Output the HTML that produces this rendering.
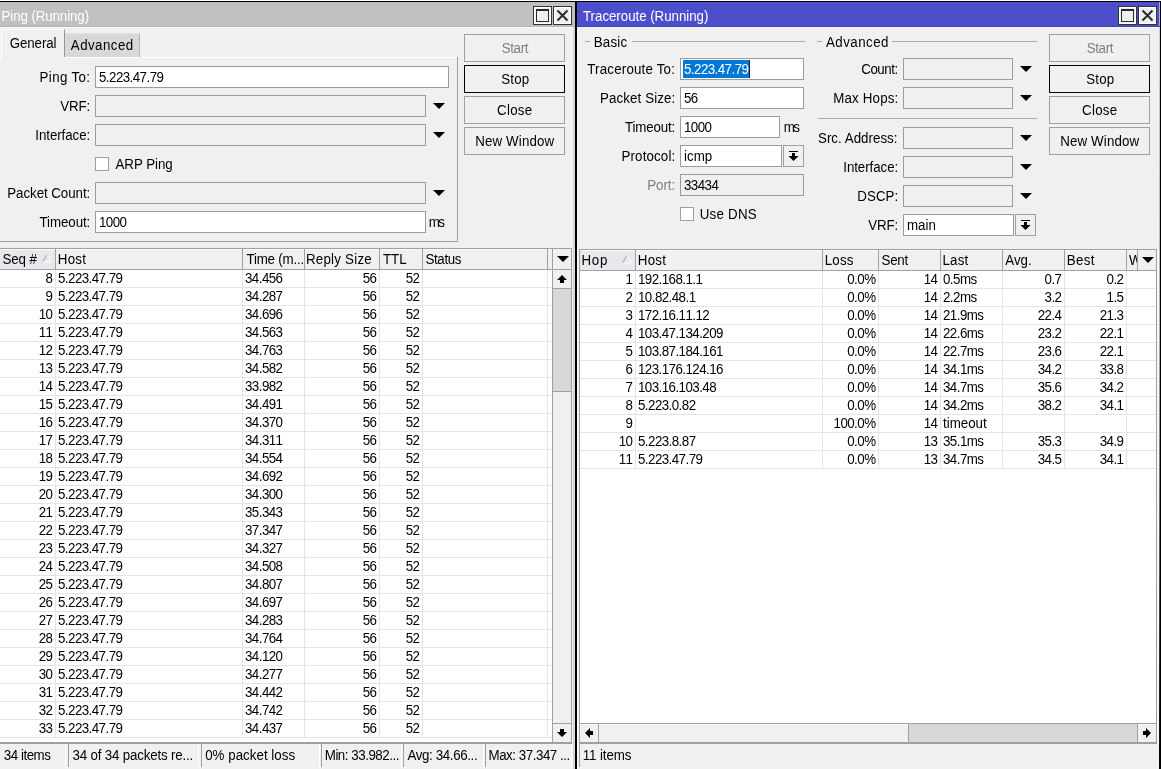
<!DOCTYPE html><html><head><meta charset="utf-8"><title>Ping / Traceroute</title><style>
html,body{margin:0;padding:0}
body{width:1161px;height:769px;overflow:hidden;background:#f0f0f0;position:relative;font-family:"Liberation Sans",sans-serif;font-size:13.33px;color:#000}
div{position:absolute;box-sizing:border-box}
.t{white-space:nowrap;line-height:16px;height:16px;transform:scaleY(1.07);transform-origin:0 12.5px}
.n{letter-spacing:-0.55px;font-kerning:none}
.in{border:1px solid #9c9c9c;background:#fff}
.dis{border:1px solid #9c9c9c;background:#f0f0f0}
.btn{border:1px solid #a0a0a0;background:#f0f0f0}
.hl{background:#e4e4e4;height:1px}
.vl{background:#e4e4e4;width:1px}
svg{position:absolute;overflow:visible}
</style></head><body><div id="w" style="left:0;top:0;width:1161px;height:769px;will-change:transform">
<div style="left:0px;top:0px;width:1161px;height:1px;background:#fff"></div>
<div style="left:0px;top:1px;width:1161px;height:1px;background:#000"></div>
<div style="left:0px;top:2px;width:575px;height:25px;background:#c0c0c0"></div>
<div style="left:577px;top:2px;width:583px;height:25px;background:#4c4ecc"></div>
<div style="left:575px;top:1px;width:2px;height:768px;background:#000"></div>
<div style="left:1160px;top:1px;width:1px;height:768px;background:#000"></div>
<div style="left:1159px;top:2px;width:1px;height:25px;background:#a6a8e2"></div>
<div style="left:1159px;top:27px;width:1px;height:742px;background:linear-gradient(#d0d0d0,#b0b0b0 40%,#404040 80%,#000)"></div>
<div style="left:573px;top:27px;width:2px;height:742px;background:#d8d8d8"></div>
<div style="left:577px;top:28px;width:2px;height:741px;background:#f6f6f6"></div>
<div style="left:0px;top:26px;width:575px;height:1px;background:#b6b6b6"></div>
<div style="left:577px;top:26px;width:583px;height:1px;background:#4444b4"></div>
<div style="left:0px;top:27px;width:573px;height:1px;background:#f7f7f7"></div>
<div style="left:577px;top:27px;width:582px;height:1px;background:#f4f4fc"></div>
<div class="t" style="left:1.60px;top:8.5px;letter-spacing:-0.11px;color:#fff">Ping (Running)</div>
<div class="t" style="left:583.00px;top:8.5px;letter-spacing:-0.04px;color:#fff">Traceroute (Running)</div>
<div style="left:533px;top:6px;width:19px;height:19px;background:#efefef;border:1px solid #333;box-shadow:inset 1px 1px 0 0 #fff,inset -1px -1px 0 0 #fff"></div>
<svg style="left:533px;top:6px" width="19" height="19"><path d="M3 3 H16 V16 H3 Z M4 5 V15 H15 V5 Z" fill="#2a2a2a" fill-rule="evenodd"/></svg>
<div style="left:553px;top:6px;width:19px;height:19px;background:#efefef;border:1px solid #333;box-shadow:inset 1px 1px 0 0 #fff,inset -1px -1px 0 0 #fff"></div>
<svg style="left:553px;top:6px" width="19" height="19"><path d="M4.5 4.5 L14.5 14.5 M14.5 4.5 L4.5 14.5" stroke="#2a2a2a" stroke-width="2" fill="none"/></svg>
<div style="left:1118px;top:6px;width:19px;height:19px;background:#efefef;border:1px solid #333;box-shadow:inset 1px 1px 0 0 #fff,inset -1px -1px 0 0 #fff"></div>
<svg style="left:1118px;top:6px" width="19" height="19"><path d="M3 3 H16 V16 H3 Z M4 5 V15 H15 V5 Z" fill="#2a2a2a" fill-rule="evenodd"/></svg>
<div style="left:1138px;top:6px;width:19px;height:19px;background:#efefef;border:1px solid #333;box-shadow:inset 1px 1px 0 0 #fff,inset -1px -1px 0 0 #fff"></div>
<svg style="left:1138px;top:6px" width="19" height="19"><path d="M4.5 4.5 L14.5 14.5 M14.5 4.5 L4.5 14.5" stroke="#2a2a2a" stroke-width="2" fill="none"/></svg>
<div style="left:65px;top:33px;width:75px;height:24px;background:#d8d8d8;border-right:1px solid #b4b4b4;border-top:1px solid #e4e4e4"></div>
<div style="left:1px;top:29px;width:64px;height:28px;background:#f0f0f0;border-left:1px solid #fff;border-top:1px solid #fff;border-right:1px solid #969696"></div>
<div style="left:0px;top:57px;width:2px;height:1px;background:#fff"></div>
<div class="t" style="left:9.70px;top:35.5px;letter-spacing:-0.09px;">General</div>
<div class="t" style="left:70.80px;top:37.5px;letter-spacing:0.45px;">Advanced</div>
<div style="left:65px;top:57px;width:393px;height:1px;background:#fff"></div>
<div style="left:457px;top:57px;width:1px;height:185px;background:#a0a0a0"></div>
<div style="left:0px;top:241px;width:458px;height:1px;background:#a0a0a0"></div>
<div class="t" style="left:39.60px;top:69.5px;letter-spacing:0.36px;">Ping To:</div>
<div class="in" style="left:95px;top:66px;width:354px;height:22px;"></div>
<div class="t n" style="left:99px;top:69.5px;">5.223.47.79</div>
<div class="t" style="left:60.25px;top:98.5px;letter-spacing:-0.10px;">VRF:</div>
<div class="dis" style="left:95px;top:95px;width:331px;height:22px;"></div>
<svg style="left:433px;top:103px" width="12" height="6"><path d="M0 0 H12 L6 6 Z" fill="#000"/></svg>
<div class="t" style="left:35.25px;top:127.5px;letter-spacing:-0.06px;">Interface:</div>
<div class="dis" style="left:95px;top:124px;width:331px;height:22px;"></div>
<svg style="left:433px;top:132px" width="12" height="6"><path d="M0 0 H12 L6 6 Z" fill="#000"/></svg>
<div style="left:95px;top:157px;width:14px;height:14px;border:1px solid #a0a0a0;background:#fff"></div>
<div class="t" style="left:115.50px;top:156.5px;letter-spacing:-0.05px;">ARP Ping</div>
<div class="t" style="left:7.25px;top:185.5px;letter-spacing:-0.06px;">Packet Count:</div>
<div class="dis" style="left:95px;top:182px;width:331px;height:22px;"></div>
<svg style="left:433px;top:190px" width="12" height="6"><path d="M0 0 H12 L6 6 Z" fill="#000"/></svg>
<div class="t" style="left:39.50px;top:214.5px;letter-spacing:-0.08px;">Timeout:</div>
<div class="in" style="left:95px;top:211px;width:331px;height:22px;"></div>
<div class="t n" style="left:99px;top:214.5px;">1000</div>
<div class="t" style="left:428.70px;top:214.5px;letter-spacing:-1.60px;">ms</div>
<div style="left:464px;top:34px;width:101px;height:28px;background:#f0f0f0;border:1px solid #a0a0a0"></div>
<div class="t" style="left:501.75px;top:40.5px;letter-spacing:-0.36px;color:#808080">Start</div>
<div style="left:464px;top:65px;width:101px;height:28px;background:#f0f0f0;border:1px solid #000;box-shadow:inset 0 0 0 1px #f0f0f0"></div>
<div class="t" style="left:501.25px;top:71.5px;letter-spacing:0.16px;">Stop</div>
<div style="left:464px;top:96px;width:101px;height:28px;background:#f0f0f0;border:1px solid #a0a0a0"></div>
<div class="t" style="left:497.00px;top:102.5px;letter-spacing:0.27px;">Close</div>
<div style="left:464px;top:127px;width:101px;height:28px;background:#f0f0f0;border:1px solid #a0a0a0"></div>
<div class="t" style="left:475.25px;top:133.5px;letter-spacing:0.12px;">New Window</div>
<div style="left:1049px;top:34px;width:101px;height:28px;background:#f0f0f0;border:1px solid #a0a0a0"></div>
<div class="t" style="left:1086.75px;top:40.5px;letter-spacing:-0.36px;color:#808080">Start</div>
<div style="left:1049px;top:65px;width:101px;height:28px;background:#f0f0f0;border:1px solid #000;box-shadow:inset 0 0 0 1px #f0f0f0"></div>
<div class="t" style="left:1086.25px;top:71.5px;letter-spacing:0.16px;">Stop</div>
<div style="left:1049px;top:96px;width:101px;height:28px;background:#f0f0f0;border:1px solid #a0a0a0"></div>
<div class="t" style="left:1082.00px;top:102.5px;letter-spacing:0.27px;">Close</div>
<div style="left:1049px;top:127px;width:101px;height:28px;background:#f0f0f0;border:1px solid #a0a0a0"></div>
<div class="t" style="left:1060.25px;top:133.5px;letter-spacing:0.12px;">New Window</div>
<div style="left:0px;top:248px;width:572px;height:1px;background:#a0a0a0"></div>
<div style="left:0px;top:249px;width:573px;height:20px;background:#f0f0f0"></div>
<div style="left:0px;top:249px;width:55px;height:20px;background:#e8e8ec"></div>
<div style="left:0px;top:249px;width:552px;height:1px;background:#fafafa"></div>
<div style="left:0px;top:269px;width:552px;height:1px;background:#a0a0a0"></div>
<div style="left:0px;top:270px;width:552px;height:472px;background:#fff"></div>
<div style="left:55px;top:249px;width:1px;height:20px;background:#a0a0a0"></div>
<div class="vl" style="left:55px;top:270px;width:1px;height:468px;"></div>
<div style="left:242px;top:249px;width:1px;height:20px;background:#a0a0a0"></div>
<div class="vl" style="left:242px;top:270px;width:1px;height:468px;"></div>
<div style="left:304px;top:249px;width:1px;height:20px;background:#a0a0a0"></div>
<div class="vl" style="left:304px;top:270px;width:1px;height:468px;"></div>
<div style="left:379px;top:249px;width:1px;height:20px;background:#a0a0a0"></div>
<div class="vl" style="left:379px;top:270px;width:1px;height:468px;"></div>
<div style="left:422px;top:249px;width:1px;height:20px;background:#a0a0a0"></div>
<div class="vl" style="left:422px;top:270px;width:1px;height:468px;"></div>
<div style="left:547px;top:249px;width:1px;height:20px;background:#a0a0a0"></div>
<div class="vl" style="left:547px;top:270px;width:1px;height:468px;"></div>
<div class="t" style="left:2.50px;top:251.5px;letter-spacing:-0.10px;">Seq #</div>
<div class="t" style="left:57.75px;top:251.5px;letter-spacing:0.27px;">Host</div>
<div class="t" style="left:246.50px;top:251.5px;letter-spacing:-0.21px;">Time (m...</div>
<div class="t" style="left:306.00px;top:251.5px;letter-spacing:0.22px;">Reply Size</div>
<div class="t" style="left:383.00px;top:251.5px;letter-spacing:-0.02px;">TTL</div>
<div class="t" style="left:425.50px;top:251.5px;letter-spacing:-0.37px;">Status</div>
<svg style="left:42px;top:254px" width="10" height="8"><path d="M0.5 8 L5 0.5" stroke="#a0a0a0" stroke-width="1" fill="none"/><path d="M5 0.5 L9.5 8 H0.5" stroke="#fff" stroke-width="1" fill="none"/></svg>
<div class="hl" style="left:0px;top:287px;width:552px;height:1px;"></div>
<div class="t n" style="left:-347.55px;width:400px;text-align:right;top:270.5px;">8</div>
<div class="t n" style="left:58px;top:270.5px;">5.223.47.79</div>
<div class="t n" style="left:245px;top:270.5px;">34.456</div>
<div class="t n" style="left:-23.55px;width:400px;text-align:right;top:270.5px;">56</div>
<div class="t n" style="left:19.45px;width:400px;text-align:right;top:270.5px;">52</div>
<div class="hl" style="left:0px;top:305px;width:552px;height:1px;"></div>
<div class="t n" style="left:-347.55px;width:400px;text-align:right;top:288.5px;">9</div>
<div class="t n" style="left:58px;top:288.5px;">5.223.47.79</div>
<div class="t n" style="left:245px;top:288.5px;">34.287</div>
<div class="t n" style="left:-23.55px;width:400px;text-align:right;top:288.5px;">56</div>
<div class="t n" style="left:19.45px;width:400px;text-align:right;top:288.5px;">52</div>
<div class="hl" style="left:0px;top:323px;width:552px;height:1px;"></div>
<div class="t n" style="left:-347.55px;width:400px;text-align:right;top:306.5px;">10</div>
<div class="t n" style="left:58px;top:306.5px;">5.223.47.79</div>
<div class="t n" style="left:245px;top:306.5px;">34.696</div>
<div class="t n" style="left:-23.55px;width:400px;text-align:right;top:306.5px;">56</div>
<div class="t n" style="left:19.45px;width:400px;text-align:right;top:306.5px;">52</div>
<div class="hl" style="left:0px;top:341px;width:552px;height:1px;"></div>
<div class="t n" style="left:-347.55px;width:400px;text-align:right;top:324.5px;">11</div>
<div class="t n" style="left:58px;top:324.5px;">5.223.47.79</div>
<div class="t n" style="left:245px;top:324.5px;">34.563</div>
<div class="t n" style="left:-23.55px;width:400px;text-align:right;top:324.5px;">56</div>
<div class="t n" style="left:19.45px;width:400px;text-align:right;top:324.5px;">52</div>
<div class="hl" style="left:0px;top:359px;width:552px;height:1px;"></div>
<div class="t n" style="left:-347.55px;width:400px;text-align:right;top:342.5px;">12</div>
<div class="t n" style="left:58px;top:342.5px;">5.223.47.79</div>
<div class="t n" style="left:245px;top:342.5px;">34.763</div>
<div class="t n" style="left:-23.55px;width:400px;text-align:right;top:342.5px;">56</div>
<div class="t n" style="left:19.45px;width:400px;text-align:right;top:342.5px;">52</div>
<div class="hl" style="left:0px;top:377px;width:552px;height:1px;"></div>
<div class="t n" style="left:-347.55px;width:400px;text-align:right;top:360.5px;">13</div>
<div class="t n" style="left:58px;top:360.5px;">5.223.47.79</div>
<div class="t n" style="left:245px;top:360.5px;">34.582</div>
<div class="t n" style="left:-23.55px;width:400px;text-align:right;top:360.5px;">56</div>
<div class="t n" style="left:19.45px;width:400px;text-align:right;top:360.5px;">52</div>
<div class="hl" style="left:0px;top:395px;width:552px;height:1px;"></div>
<div class="t n" style="left:-347.55px;width:400px;text-align:right;top:378.5px;">14</div>
<div class="t n" style="left:58px;top:378.5px;">5.223.47.79</div>
<div class="t n" style="left:245px;top:378.5px;">33.982</div>
<div class="t n" style="left:-23.55px;width:400px;text-align:right;top:378.5px;">56</div>
<div class="t n" style="left:19.45px;width:400px;text-align:right;top:378.5px;">52</div>
<div class="hl" style="left:0px;top:413px;width:552px;height:1px;"></div>
<div class="t n" style="left:-347.55px;width:400px;text-align:right;top:396.5px;">15</div>
<div class="t n" style="left:58px;top:396.5px;">5.223.47.79</div>
<div class="t n" style="left:245px;top:396.5px;">34.491</div>
<div class="t n" style="left:-23.55px;width:400px;text-align:right;top:396.5px;">56</div>
<div class="t n" style="left:19.45px;width:400px;text-align:right;top:396.5px;">52</div>
<div class="hl" style="left:0px;top:431px;width:552px;height:1px;"></div>
<div class="t n" style="left:-347.55px;width:400px;text-align:right;top:414.5px;">16</div>
<div class="t n" style="left:58px;top:414.5px;">5.223.47.79</div>
<div class="t n" style="left:245px;top:414.5px;">34.370</div>
<div class="t n" style="left:-23.55px;width:400px;text-align:right;top:414.5px;">56</div>
<div class="t n" style="left:19.45px;width:400px;text-align:right;top:414.5px;">52</div>
<div class="hl" style="left:0px;top:449px;width:552px;height:1px;"></div>
<div class="t n" style="left:-347.55px;width:400px;text-align:right;top:432.5px;">17</div>
<div class="t n" style="left:58px;top:432.5px;">5.223.47.79</div>
<div class="t n" style="left:245px;top:432.5px;">34.311</div>
<div class="t n" style="left:-23.55px;width:400px;text-align:right;top:432.5px;">56</div>
<div class="t n" style="left:19.45px;width:400px;text-align:right;top:432.5px;">52</div>
<div class="hl" style="left:0px;top:467px;width:552px;height:1px;"></div>
<div class="t n" style="left:-347.55px;width:400px;text-align:right;top:450.5px;">18</div>
<div class="t n" style="left:58px;top:450.5px;">5.223.47.79</div>
<div class="t n" style="left:245px;top:450.5px;">34.554</div>
<div class="t n" style="left:-23.55px;width:400px;text-align:right;top:450.5px;">56</div>
<div class="t n" style="left:19.45px;width:400px;text-align:right;top:450.5px;">52</div>
<div class="hl" style="left:0px;top:485px;width:552px;height:1px;"></div>
<div class="t n" style="left:-347.55px;width:400px;text-align:right;top:468.5px;">19</div>
<div class="t n" style="left:58px;top:468.5px;">5.223.47.79</div>
<div class="t n" style="left:245px;top:468.5px;">34.692</div>
<div class="t n" style="left:-23.55px;width:400px;text-align:right;top:468.5px;">56</div>
<div class="t n" style="left:19.45px;width:400px;text-align:right;top:468.5px;">52</div>
<div class="hl" style="left:0px;top:503px;width:552px;height:1px;"></div>
<div class="t n" style="left:-347.55px;width:400px;text-align:right;top:486.5px;">20</div>
<div class="t n" style="left:58px;top:486.5px;">5.223.47.79</div>
<div class="t n" style="left:245px;top:486.5px;">34.300</div>
<div class="t n" style="left:-23.55px;width:400px;text-align:right;top:486.5px;">56</div>
<div class="t n" style="left:19.45px;width:400px;text-align:right;top:486.5px;">52</div>
<div class="hl" style="left:0px;top:521px;width:552px;height:1px;"></div>
<div class="t n" style="left:-347.55px;width:400px;text-align:right;top:504.5px;">21</div>
<div class="t n" style="left:58px;top:504.5px;">5.223.47.79</div>
<div class="t n" style="left:245px;top:504.5px;">35.343</div>
<div class="t n" style="left:-23.55px;width:400px;text-align:right;top:504.5px;">56</div>
<div class="t n" style="left:19.45px;width:400px;text-align:right;top:504.5px;">52</div>
<div class="hl" style="left:0px;top:539px;width:552px;height:1px;"></div>
<div class="t n" style="left:-347.55px;width:400px;text-align:right;top:522.5px;">22</div>
<div class="t n" style="left:58px;top:522.5px;">5.223.47.79</div>
<div class="t n" style="left:245px;top:522.5px;">37.347</div>
<div class="t n" style="left:-23.55px;width:400px;text-align:right;top:522.5px;">56</div>
<div class="t n" style="left:19.45px;width:400px;text-align:right;top:522.5px;">52</div>
<div class="hl" style="left:0px;top:557px;width:552px;height:1px;"></div>
<div class="t n" style="left:-347.55px;width:400px;text-align:right;top:540.5px;">23</div>
<div class="t n" style="left:58px;top:540.5px;">5.223.47.79</div>
<div class="t n" style="left:245px;top:540.5px;">34.327</div>
<div class="t n" style="left:-23.55px;width:400px;text-align:right;top:540.5px;">56</div>
<div class="t n" style="left:19.45px;width:400px;text-align:right;top:540.5px;">52</div>
<div class="hl" style="left:0px;top:575px;width:552px;height:1px;"></div>
<div class="t n" style="left:-347.55px;width:400px;text-align:right;top:558.5px;">24</div>
<div class="t n" style="left:58px;top:558.5px;">5.223.47.79</div>
<div class="t n" style="left:245px;top:558.5px;">34.508</div>
<div class="t n" style="left:-23.55px;width:400px;text-align:right;top:558.5px;">56</div>
<div class="t n" style="left:19.45px;width:400px;text-align:right;top:558.5px;">52</div>
<div class="hl" style="left:0px;top:593px;width:552px;height:1px;"></div>
<div class="t n" style="left:-347.55px;width:400px;text-align:right;top:576.5px;">25</div>
<div class="t n" style="left:58px;top:576.5px;">5.223.47.79</div>
<div class="t n" style="left:245px;top:576.5px;">34.807</div>
<div class="t n" style="left:-23.55px;width:400px;text-align:right;top:576.5px;">56</div>
<div class="t n" style="left:19.45px;width:400px;text-align:right;top:576.5px;">52</div>
<div class="hl" style="left:0px;top:611px;width:552px;height:1px;"></div>
<div class="t n" style="left:-347.55px;width:400px;text-align:right;top:594.5px;">26</div>
<div class="t n" style="left:58px;top:594.5px;">5.223.47.79</div>
<div class="t n" style="left:245px;top:594.5px;">34.697</div>
<div class="t n" style="left:-23.55px;width:400px;text-align:right;top:594.5px;">56</div>
<div class="t n" style="left:19.45px;width:400px;text-align:right;top:594.5px;">52</div>
<div class="hl" style="left:0px;top:629px;width:552px;height:1px;"></div>
<div class="t n" style="left:-347.55px;width:400px;text-align:right;top:612.5px;">27</div>
<div class="t n" style="left:58px;top:612.5px;">5.223.47.79</div>
<div class="t n" style="left:245px;top:612.5px;">34.283</div>
<div class="t n" style="left:-23.55px;width:400px;text-align:right;top:612.5px;">56</div>
<div class="t n" style="left:19.45px;width:400px;text-align:right;top:612.5px;">52</div>
<div class="hl" style="left:0px;top:647px;width:552px;height:1px;"></div>
<div class="t n" style="left:-347.55px;width:400px;text-align:right;top:630.5px;">28</div>
<div class="t n" style="left:58px;top:630.5px;">5.223.47.79</div>
<div class="t n" style="left:245px;top:630.5px;">34.764</div>
<div class="t n" style="left:-23.55px;width:400px;text-align:right;top:630.5px;">56</div>
<div class="t n" style="left:19.45px;width:400px;text-align:right;top:630.5px;">52</div>
<div class="hl" style="left:0px;top:665px;width:552px;height:1px;"></div>
<div class="t n" style="left:-347.55px;width:400px;text-align:right;top:648.5px;">29</div>
<div class="t n" style="left:58px;top:648.5px;">5.223.47.79</div>
<div class="t n" style="left:245px;top:648.5px;">34.120</div>
<div class="t n" style="left:-23.55px;width:400px;text-align:right;top:648.5px;">56</div>
<div class="t n" style="left:19.45px;width:400px;text-align:right;top:648.5px;">52</div>
<div class="hl" style="left:0px;top:683px;width:552px;height:1px;"></div>
<div class="t n" style="left:-347.55px;width:400px;text-align:right;top:666.5px;">30</div>
<div class="t n" style="left:58px;top:666.5px;">5.223.47.79</div>
<div class="t n" style="left:245px;top:666.5px;">34.277</div>
<div class="t n" style="left:-23.55px;width:400px;text-align:right;top:666.5px;">56</div>
<div class="t n" style="left:19.45px;width:400px;text-align:right;top:666.5px;">52</div>
<div class="hl" style="left:0px;top:701px;width:552px;height:1px;"></div>
<div class="t n" style="left:-347.55px;width:400px;text-align:right;top:684.5px;">31</div>
<div class="t n" style="left:58px;top:684.5px;">5.223.47.79</div>
<div class="t n" style="left:245px;top:684.5px;">34.442</div>
<div class="t n" style="left:-23.55px;width:400px;text-align:right;top:684.5px;">56</div>
<div class="t n" style="left:19.45px;width:400px;text-align:right;top:684.5px;">52</div>
<div class="hl" style="left:0px;top:719px;width:552px;height:1px;"></div>
<div class="t n" style="left:-347.55px;width:400px;text-align:right;top:702.5px;">32</div>
<div class="t n" style="left:58px;top:702.5px;">5.223.47.79</div>
<div class="t n" style="left:245px;top:702.5px;">34.742</div>
<div class="t n" style="left:-23.55px;width:400px;text-align:right;top:702.5px;">56</div>
<div class="t n" style="left:19.45px;width:400px;text-align:right;top:702.5px;">52</div>
<div class="hl" style="left:0px;top:737px;width:552px;height:1px;"></div>
<div class="t n" style="left:-347.55px;width:400px;text-align:right;top:720.5px;">33</div>
<div class="t n" style="left:58px;top:720.5px;">5.223.47.79</div>
<div class="t n" style="left:245px;top:720.5px;">34.437</div>
<div class="t n" style="left:-23.55px;width:400px;text-align:right;top:720.5px;">56</div>
<div class="t n" style="left:19.45px;width:400px;text-align:right;top:720.5px;">52</div>
<div style="left:552px;top:249px;width:20px;height:20px;background:#f0f0f0;border-left:1px solid #a0a0a0;border-right:1px solid #a0a0a0"></div>
<svg style="left:557px;top:256px" width="12" height="6"><path d="M0 0 H12 L6 6 Z" fill="#000"/></svg>
<div style="left:552px;top:269px;width:20px;height:473px;background:#f0f0f0;border-left:1px solid #a0a0a0;border-right:1px solid #a0a0a0"></div>
<div style="left:552px;top:269px;width:20px;height:1px;background:#a0a0a0"></div>
<div style="left:552px;top:288px;width:20px;height:104px;background:#d8d8d8;border:1px solid #a0a0a0"></div>
<div style="left:552px;top:723px;width:20px;height:1px;background:#a0a0a0"></div>
<svg style="left:557px;top:275px;transform:rotate(0deg);transform-origin:5px 4px" width="10" height="8"><path d="M5 0 L10 5 H7 V8 H3 V5 H0 Z" fill="#000"/></svg>
<svg style="left:557px;top:729px;transform:rotate(180deg);transform-origin:5px 4px" width="10" height="8"><path d="M5 0 L10 5 H7 V8 H3 V5 H0 Z" fill="#000"/></svg>
<div style="left:0px;top:742px;width:572px;height:2px;background:#a0a0a0"></div>
<div style="left:-1px;top:744px;width:67px;height:23px;border-left:1px solid #a0a0a0;border-right:1px solid #fff;background:#f0f0f0"></div>
<div class="t" style="left:3.75px;top:747.5px;letter-spacing:-0.46px;">34 items</div>
<div style="left:68px;top:744px;width:131px;height:23px;border-left:1px solid #a0a0a0;border-right:1px solid #fff;background:#f0f0f0"></div>
<div class="t" style="left:72.50px;top:747.5px;letter-spacing:-0.18px;">34 of 34 packets re...</div>
<div style="left:201px;top:744px;width:119px;height:23px;border-left:1px solid #a0a0a0;border-right:1px solid #fff;background:#f0f0f0"></div>
<div class="t" style="left:205.20px;top:747.5px;letter-spacing:0.02px;">0% packet loss</div>
<div style="left:321px;top:744px;width:81px;height:23px;border-left:1px solid #a0a0a0;border-right:1px solid #fff;background:#f0f0f0"></div>
<div class="t" style="left:324.75px;top:747.5px;letter-spacing:-0.47px;">Min: 33.982...</div>
<div style="left:403px;top:744px;width:81px;height:23px;border-left:1px solid #a0a0a0;border-right:1px solid #fff;background:#f0f0f0"></div>
<div class="t" style="left:407.50px;top:747.5px;letter-spacing:-0.37px;">Avg: 34.66...</div>
<div style="left:485px;top:744px;width:87px;height:23px;border-left:1px solid #a0a0a0;border-right:1px solid #fff;background:#f0f0f0"></div>
<div class="t" style="left:488.50px;top:747.5px;letter-spacing:-0.46px;">Max: 37.347 ...</div>
<div style="left:585px;top:41px;width:5px;height:1px;background:#acacac"></div>
<div class="t" style="left:593.75px;top:34.5px;letter-spacing:0.21px;">Basic</div>
<div style="left:632px;top:41px;width:173px;height:1px;background:#acacac"></div>
<div style="left:817px;top:41px;width:5px;height:1px;background:#acacac"></div>
<div class="t" style="left:826.00px;top:34.5px;letter-spacing:0.45px;">Advanced</div>
<div style="left:892px;top:41px;width:145px;height:1px;background:#acacac"></div>
<div class="t" style="left:587.25px;top:61.5px;letter-spacing:0.19px;">Traceroute To:</div>
<div class="in" style="left:680px;top:58px;width:124px;height:22px;"></div>
<div style="left:683px;top:60px;width:67px;height:18px;background:#0078d7"></div>
<div style="left:749px;top:60px;width:1px;height:18px;background:#10204a"></div>
<div class="t n" style="left:684px;top:61.5px;color:#fff">5.223.47.79</div>
<div class="t" style="left:600.00px;top:90.5px;letter-spacing:0.10px;">Packet Size:</div>
<div class="in" style="left:680px;top:87px;width:124px;height:22px;"></div>
<div class="t n" style="left:684px;top:90.5px;">56</div>
<div class="t" style="left:625.00px;top:119.5px;letter-spacing:-0.16px;">Timeout:</div>
<div class="in" style="left:680px;top:116px;width:100px;height:22px;"></div>
<div class="t n" style="left:684px;top:119.5px;">1000</div>
<div class="t" style="left:783.70px;top:119.5px;letter-spacing:-1.60px;">ms</div>
<div class="t" style="left:621.50px;top:148.5px;letter-spacing:0.14px;">Protocol:</div>
<div class="in" style="left:680px;top:145px;width:102px;height:22px;"></div>
<div class="t" style="left:684px;top:148.5px;">icmp</div>
<div class="btn" style="left:783px;top:145px;width:21px;height:22px;"></div>
<svg style="left:783px;top:145px" width="21" height="22"><path d="M6 6 H15 V7 H6 Z M9 8 H12 V11 H15.5 L10.5 16 L5.5 11 H9 Z" fill="#000"/></svg>
<div class="t" style="left:647.25px;top:177.5px;letter-spacing:-0.05px;color:#808080">Port:</div>
<div class="dis" style="left:680px;top:174px;width:124px;height:22px;"></div>
<div class="t n" style="left:684px;top:177.5px;">33434</div>
<div style="left:680px;top:207px;width:14px;height:14px;border:1px solid #a0a0a0;background:#fff"></div>
<div class="t" style="left:699.75px;top:206.5px;letter-spacing:0.22px;">Use DNS</div>
<div class="t" style="left:861.25px;top:61.5px;letter-spacing:-0.46px;">Count:</div>
<div class="dis" style="left:903px;top:58px;width:110px;height:22px;"></div>
<svg style="left:1020px;top:66px" width="12" height="6"><path d="M0 0 H12 L6 6 Z" fill="#000"/></svg>
<div class="t" style="left:833.25px;top:90.5px;letter-spacing:0.16px;">Max Hops:</div>
<div class="dis" style="left:903px;top:87px;width:110px;height:22px;"></div>
<svg style="left:1020px;top:95px" width="12" height="6"><path d="M0 0 H12 L6 6 Z" fill="#000"/></svg>
<div style="left:818px;top:118px;width:219px;height:1px;background:#acacac"></div>
<div class="t" style="left:818.00px;top:130.5px;letter-spacing:0.02px;">Src. Address:</div>
<div class="dis" style="left:903px;top:127px;width:110px;height:22px;"></div>
<svg style="left:1020px;top:135px" width="12" height="6"><path d="M0 0 H12 L6 6 Z" fill="#000"/></svg>
<div class="t" style="left:843.25px;top:159.5px;letter-spacing:-0.07px;">Interface:</div>
<div class="dis" style="left:903px;top:156px;width:110px;height:22px;"></div>
<svg style="left:1020px;top:164px" width="12" height="6"><path d="M0 0 H12 L6 6 Z" fill="#000"/></svg>
<div class="t" style="left:857.25px;top:188.5px;letter-spacing:0.06px;">DSCP:</div>
<div class="dis" style="left:903px;top:185px;width:110px;height:22px;"></div>
<svg style="left:1020px;top:193px" width="12" height="6"><path d="M0 0 H12 L6 6 Z" fill="#000"/></svg>
<div class="t" style="left:868.25px;top:217.5px;letter-spacing:-0.14px;">VRF:</div>
<div class="in" style="left:903px;top:214px;width:111px;height:22px;"></div>
<div class="t" style="left:907px;top:217.5px;">main</div>
<div class="btn" style="left:1015px;top:214px;width:21px;height:22px;"></div>
<svg style="left:1015px;top:214px" width="21" height="22"><path d="M6 6 H15 V7 H6 Z M9 8 H12 V11 H15.5 L10.5 16 L5.5 11 H9 Z" fill="#000"/></svg>
<div style="left:579px;top:249px;width:578px;height:1px;background:#a0a0a0"></div>
<div style="left:579px;top:249px;width:1px;height:518px;background:#a0a0a0"></div>
<div style="left:1156px;top:249px;width:1px;height:494px;background:#a0a0a0"></div>
<div style="left:1157px;top:250px;width:2px;height:493px;background:#f7f7f7"></div>
<div style="left:580px;top:250px;width:576px;height:20px;background:#f0f0f0"></div>
<div style="left:580px;top:250px;width:55px;height:20px;background:#e8e8ec"></div>
<div style="left:580px;top:250px;width:576px;height:1px;background:#fafafa"></div>
<div style="left:580px;top:270px;width:576px;height:1px;background:#a0a0a0"></div>
<div style="left:580px;top:271px;width:576px;height:452px;background:#fff"></div>
<div style="left:635px;top:250px;width:1px;height:20px;background:#a0a0a0"></div>
<div class="vl" style="left:635px;top:271px;width:1px;height:198px;"></div>
<div style="left:822px;top:250px;width:1px;height:20px;background:#a0a0a0"></div>
<div class="vl" style="left:822px;top:271px;width:1px;height:198px;"></div>
<div style="left:878px;top:250px;width:1px;height:20px;background:#a0a0a0"></div>
<div class="vl" style="left:878px;top:271px;width:1px;height:198px;"></div>
<div style="left:940px;top:250px;width:1px;height:20px;background:#a0a0a0"></div>
<div class="vl" style="left:940px;top:271px;width:1px;height:198px;"></div>
<div style="left:1002px;top:250px;width:1px;height:20px;background:#a0a0a0"></div>
<div class="vl" style="left:1002px;top:271px;width:1px;height:198px;"></div>
<div style="left:1064px;top:250px;width:1px;height:20px;background:#a0a0a0"></div>
<div class="vl" style="left:1064px;top:271px;width:1px;height:198px;"></div>
<div style="left:1126px;top:250px;width:1px;height:20px;background:#a0a0a0"></div>
<div class="vl" style="left:1126px;top:271px;width:1px;height:198px;"></div>
<div class="t" style="left:581.50px;top:252.5px;letter-spacing:0.73px;">Hop</div>
<div class="t" style="left:637.75px;top:252.5px;letter-spacing:0.27px;">Host</div>
<div class="t" style="left:824.75px;top:252.5px;letter-spacing:0.17px;">Loss</div>
<div class="t" style="left:881.50px;top:252.5px;letter-spacing:-0.24px;">Sent</div>
<div class="t" style="left:942.50px;top:252.5px;letter-spacing:0.17px;">Last</div>
<div class="t" style="left:1005.25px;top:252.5px;letter-spacing:0.01px;">Avg.</div>
<div class="t" style="left:1066.75px;top:252.5px;letter-spacing:0.34px;">Best</div>
<div style="left:1127px;top:250px;width:10px;height:20px;overflow:hidden"><div class="t" style="left:2px;top:2.5px">W</div></div>
<svg style="left:622px;top:255px" width="10" height="8"><path d="M0.5 8 L5 0.5" stroke="#a0a0a0" stroke-width="1" fill="none"/><path d="M5 0.5 L9.5 8 H0.5" stroke="#fff" stroke-width="1" fill="none"/></svg>
<div style="left:1137px;top:250px;width:19px;height:20px;background:#f0f0f0;border-left:1px solid #a0a0a0"></div>
<svg style="left:1142px;top:257px" width="12" height="6"><path d="M0 0 H12 L6 6 Z" fill="#000"/></svg>
<div class="hl" style="left:580px;top:288px;width:576px;height:1px;"></div>
<div class="t n" style="left:232.45px;width:400px;text-align:right;top:271.5px;">1</div>
<div class="t n" style="left:638px;top:271.5px;">192.168.1.1</div>
<div class="t n" style="left:475.45px;width:400px;text-align:right;top:271.5px;">0.0%</div>
<div class="t n" style="left:537.45px;width:400px;text-align:right;top:271.5px;">14</div>
<div class="t n" style="left:943px;top:271.5px;">0.5ms</div>
<div class="t n" style="left:661.45px;width:400px;text-align:right;top:271.5px;">0.7</div>
<div class="t n" style="left:723.45px;width:400px;text-align:right;top:271.5px;">0.2</div>
<div class="hl" style="left:580px;top:306px;width:576px;height:1px;"></div>
<div class="t n" style="left:232.45px;width:400px;text-align:right;top:289.5px;">2</div>
<div class="t n" style="left:638px;top:289.5px;">10.82.48.1</div>
<div class="t n" style="left:475.45px;width:400px;text-align:right;top:289.5px;">0.0%</div>
<div class="t n" style="left:537.45px;width:400px;text-align:right;top:289.5px;">14</div>
<div class="t n" style="left:943px;top:289.5px;">2.2ms</div>
<div class="t n" style="left:661.45px;width:400px;text-align:right;top:289.5px;">3.2</div>
<div class="t n" style="left:723.45px;width:400px;text-align:right;top:289.5px;">1.5</div>
<div class="hl" style="left:580px;top:324px;width:576px;height:1px;"></div>
<div class="t n" style="left:232.45px;width:400px;text-align:right;top:307.5px;">3</div>
<div class="t n" style="left:638px;top:307.5px;">172.16.11.12</div>
<div class="t n" style="left:475.45px;width:400px;text-align:right;top:307.5px;">0.0%</div>
<div class="t n" style="left:537.45px;width:400px;text-align:right;top:307.5px;">14</div>
<div class="t n" style="left:943px;top:307.5px;">21.9ms</div>
<div class="t n" style="left:661.45px;width:400px;text-align:right;top:307.5px;">22.4</div>
<div class="t n" style="left:723.45px;width:400px;text-align:right;top:307.5px;">21.3</div>
<div class="hl" style="left:580px;top:342px;width:576px;height:1px;"></div>
<div class="t n" style="left:232.45px;width:400px;text-align:right;top:325.5px;">4</div>
<div class="t n" style="left:638px;top:325.5px;">103.47.134.209</div>
<div class="t n" style="left:475.45px;width:400px;text-align:right;top:325.5px;">0.0%</div>
<div class="t n" style="left:537.45px;width:400px;text-align:right;top:325.5px;">14</div>
<div class="t n" style="left:943px;top:325.5px;">22.6ms</div>
<div class="t n" style="left:661.45px;width:400px;text-align:right;top:325.5px;">23.2</div>
<div class="t n" style="left:723.45px;width:400px;text-align:right;top:325.5px;">22.1</div>
<div class="hl" style="left:580px;top:360px;width:576px;height:1px;"></div>
<div class="t n" style="left:232.45px;width:400px;text-align:right;top:343.5px;">5</div>
<div class="t n" style="left:638px;top:343.5px;">103.87.184.161</div>
<div class="t n" style="left:475.45px;width:400px;text-align:right;top:343.5px;">0.0%</div>
<div class="t n" style="left:537.45px;width:400px;text-align:right;top:343.5px;">14</div>
<div class="t n" style="left:943px;top:343.5px;">22.7ms</div>
<div class="t n" style="left:661.45px;width:400px;text-align:right;top:343.5px;">23.6</div>
<div class="t n" style="left:723.45px;width:400px;text-align:right;top:343.5px;">22.1</div>
<div class="hl" style="left:580px;top:378px;width:576px;height:1px;"></div>
<div class="t n" style="left:232.45px;width:400px;text-align:right;top:361.5px;">6</div>
<div class="t n" style="left:638px;top:361.5px;">123.176.124.16</div>
<div class="t n" style="left:475.45px;width:400px;text-align:right;top:361.5px;">0.0%</div>
<div class="t n" style="left:537.45px;width:400px;text-align:right;top:361.5px;">14</div>
<div class="t n" style="left:943px;top:361.5px;">34.1ms</div>
<div class="t n" style="left:661.45px;width:400px;text-align:right;top:361.5px;">34.2</div>
<div class="t n" style="left:723.45px;width:400px;text-align:right;top:361.5px;">33.8</div>
<div class="hl" style="left:580px;top:396px;width:576px;height:1px;"></div>
<div class="t n" style="left:232.45px;width:400px;text-align:right;top:379.5px;">7</div>
<div class="t n" style="left:638px;top:379.5px;">103.16.103.48</div>
<div class="t n" style="left:475.45px;width:400px;text-align:right;top:379.5px;">0.0%</div>
<div class="t n" style="left:537.45px;width:400px;text-align:right;top:379.5px;">14</div>
<div class="t n" style="left:943px;top:379.5px;">34.7ms</div>
<div class="t n" style="left:661.45px;width:400px;text-align:right;top:379.5px;">35.6</div>
<div class="t n" style="left:723.45px;width:400px;text-align:right;top:379.5px;">34.2</div>
<div class="hl" style="left:580px;top:414px;width:576px;height:1px;"></div>
<div class="t n" style="left:232.45px;width:400px;text-align:right;top:397.5px;">8</div>
<div class="t n" style="left:638px;top:397.5px;">5.223.0.82</div>
<div class="t n" style="left:475.45px;width:400px;text-align:right;top:397.5px;">0.0%</div>
<div class="t n" style="left:537.45px;width:400px;text-align:right;top:397.5px;">14</div>
<div class="t n" style="left:943px;top:397.5px;">34.2ms</div>
<div class="t n" style="left:661.45px;width:400px;text-align:right;top:397.5px;">38.2</div>
<div class="t n" style="left:723.45px;width:400px;text-align:right;top:397.5px;">34.1</div>
<div class="hl" style="left:580px;top:432px;width:576px;height:1px;"></div>
<div class="t n" style="left:232.45px;width:400px;text-align:right;top:415.5px;">9</div>
<div class="t n" style="left:638px;top:415.5px;"></div>
<div class="t n" style="left:475.45px;width:400px;text-align:right;top:415.5px;">100.0%</div>
<div class="t n" style="left:537.45px;width:400px;text-align:right;top:415.5px;">14</div>
<div class="t" style="left:943px;top:415.5px;">timeout</div>
<div class="t n" style="left:661.45px;width:400px;text-align:right;top:415.5px;"></div>
<div class="t n" style="left:723.45px;width:400px;text-align:right;top:415.5px;"></div>
<div class="hl" style="left:580px;top:450px;width:576px;height:1px;"></div>
<div class="t n" style="left:232.45px;width:400px;text-align:right;top:433.5px;">10</div>
<div class="t n" style="left:638px;top:433.5px;">5.223.8.87</div>
<div class="t n" style="left:475.45px;width:400px;text-align:right;top:433.5px;">0.0%</div>
<div class="t n" style="left:537.45px;width:400px;text-align:right;top:433.5px;">13</div>
<div class="t n" style="left:943px;top:433.5px;">35.1ms</div>
<div class="t n" style="left:661.45px;width:400px;text-align:right;top:433.5px;">35.3</div>
<div class="t n" style="left:723.45px;width:400px;text-align:right;top:433.5px;">34.9</div>
<div class="hl" style="left:580px;top:468px;width:576px;height:1px;"></div>
<div class="t n" style="left:232.45px;width:400px;text-align:right;top:451.5px;">11</div>
<div class="t n" style="left:638px;top:451.5px;">5.223.47.79</div>
<div class="t n" style="left:475.45px;width:400px;text-align:right;top:451.5px;">0.0%</div>
<div class="t n" style="left:537.45px;width:400px;text-align:right;top:451.5px;">13</div>
<div class="t n" style="left:943px;top:451.5px;">34.7ms</div>
<div class="t n" style="left:661.45px;width:400px;text-align:right;top:451.5px;">34.5</div>
<div class="t n" style="left:723.45px;width:400px;text-align:right;top:451.5px;">34.1</div>
<div style="left:580px;top:723px;width:576px;height:1px;background:#a0a0a0"></div>
<div style="left:580px;top:724px;width:576px;height:18px;background:#f0f0f0;border-top:1px solid #fbfbfb"></div>
<div style="left:598px;top:724px;width:1px;height:18px;background:#a0a0a0"></div>
<div style="left:908px;top:723px;width:230px;height:20px;background:#d8d8d8;border:1px solid #a0a0a0"></div>
<svg style="left:584px;top:729px;transform:rotate(-90deg);transform-origin:5px 4px" width="10" height="8"><path d="M5 0 L10 5 H7 V8 H3 V5 H0 Z" fill="#000"/></svg>
<svg style="left:1142px;top:729px;transform:rotate(90deg);transform-origin:5px 4px" width="10" height="8"><path d="M5 0 L10 5 H7 V8 H3 V5 H0 Z" fill="#000"/></svg>
<div style="left:579px;top:742px;width:578px;height:2px;background:#a0a0a0"></div>
<div class="t" style="left:582.75px;top:747.5px;letter-spacing:-0.10px;">11 items</div>
</div></body></html>
